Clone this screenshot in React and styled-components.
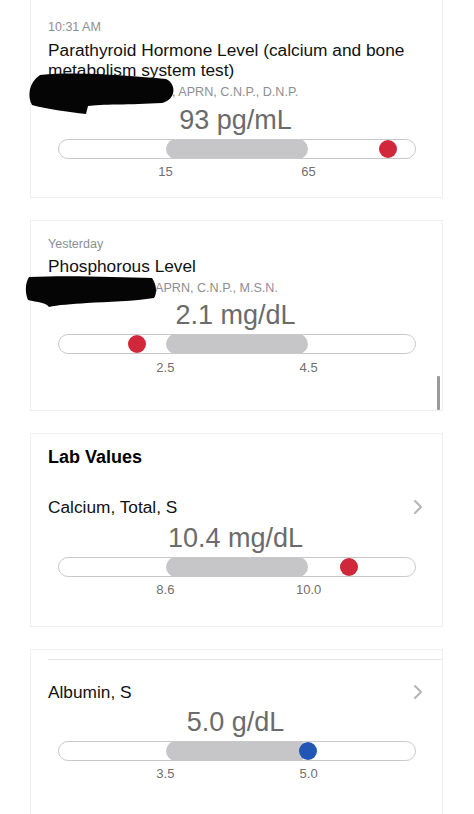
import React from 'react';
import styled, { createGlobalStyle } from 'styled-components';

const GlobalStyle = createGlobalStyle`
  html, body {
    margin: 0;
    padding: 0;
    background: #ffffff;
    font-family: "Liberation Sans", Arial, Helvetica, sans-serif;
    -webkit-font-smoothing: antialiased;
  }
`;

const Page = styled.div`
  width: 474px;
  height: 814px;
  overflow: hidden;
  padding: 0 31px 0 30px;
  box-sizing: border-box;
  display: flex;
  flex-direction: column;
  gap: 22px;
`;

const Card = styled.div`
  border: 1px solid #eeeeee;
  border-top: ${p => (p.$first ? 'none' : '1px solid #eeeeee')};
  padding: ${p => p.$top}px 19px ${p => p.$bottom}px 17px;
  display: flex;
  flex-direction: column;
  flex-shrink: 0;
`;

const Time = styled.div`
  font-size: 12.5px;
  line-height: 16px;
  color: #8e8e93;
`;

const Title = styled.div`
  margin-top: ${p => p.$mt || 4}px;
  font-size: 17.3px;
  line-height: 20px;
  color: #111111;
`;

const Provider = styled.div`
  margin-top: 4px;
  display: flex;
  align-items: center;
  font-size: 12.6px;
  line-height: 16px;
  color: #8e8e93;
`;

const Redacted = styled.span`
  position: relative;
  display: inline-block;
  flex-shrink: 0;
  width: ${p => p.$w}px;
  height: 16px;

  svg {
    position: absolute;
    left: ${p => p.$x}px;
    top: ${p => p.$y}px;
    overflow: visible;
  }
`;

const Heading = styled.div`
  font-size: 18px;
  line-height: 22px;
  font-weight: 700;
  color: #000000;
`;

const NameRow = styled.div`
  margin-top: ${p => p.$mt}px;
  display: flex;
  align-items: center;
  justify-content: space-between;
  font-size: 17.3px;
  line-height: 20px;
  color: #111111;
`;

const Divider = styled.div`
  height: 1px;
  background: #e6e6e6;
  margin-right: -19px;
`;

const Value = styled.div`
  margin-top: ${p => p.$mt || 5}px;
  text-align: center;
  font-size: 27px;
  line-height: 30px;
  color: #6b6b6b;
`;

const Chart = styled.div`
  margin: 4px 7px 0 10px;
  display: flex;
  flex-direction: column;
`;

const Track = styled.div`
  position: relative;
  height: 20px;
  box-sizing: border-box;
  border: 1px solid #c9c9cc;
  border-radius: 10px;
  background: #ffffff;
  overflow: hidden;
`;

const Range = styled.div`
  position: absolute;
  top: -1px;
  bottom: -1px;
  left: 30%;
  width: 40%;
  border-radius: 10px;
  background: #c6c6c8;
`;

const Dot = styled.div`
  position: absolute;
  top: 50%;
  width: 18px;
  height: 18px;
  border-radius: 50%;
  transform: translate(-50%, -50%);
  background: ${p => (p.$flagged ? '#d0283a' : '#2156b5')};
`;

const Labels = styled.div`
  position: relative;
  height: 16px;
  margin-top: ${p => p.$mt || 5}px;
  font-size: 13px;
  line-height: 16px;
  color: #707070;
`;

const Label = styled.span`
  position: absolute;
  top: 0;
  transform: translateX(-50%);
`;

const ScrollThumb = styled.div`
  position: absolute;
  left: 437px;
  top: 376px;
  width: 3px;
  height: 34px;
  border-radius: 1px;
  background: #9a9a9a;
`;

const Chevron = () => (
  <svg width="10" height="16" viewBox="0 0 10 16">
    <polyline points="2,2 8,8 2,14" fill="none" stroke="#b4b4b8" strokeWidth="2" strokeLinecap="round" strokeLinejoin="round" />
  </svg>
);

const RangeChart = ({ pos, flagged, low, high, labelsMt }) => (
  <Chart>
    <Track>
      <Range />
      <Dot style={{ left: `${pos}%` }} $flagged={flagged} />
    </Track>
    <Labels $mt={labelsMt}>
      <Label style={{ left: '30%' }}>{low}</Label>
      <Label style={{ left: '70%' }}>{high}</Label>
    </Labels>
  </Chart>
);

export default function App() {
  return (
    <>
      <GlobalStyle />
      <Page>
        <Card $first $top={19} $bottom={17}>
          <Time>10:31 AM</Time>
          <Title $mt={5}>
            Parathyroid Hormone Level (calcium and bone metabolism system test)
          </Title>
          <Provider>
            <Redacted $w={124} $x={-18} $y={-10}>
              <svg width="142" height="40" viewBox="0 0 142 40">
                <path
                  d="M10 1 C 50 -3, 100 2, 136 5 C 147 10, 146 26, 132 29 C 100 31, 70 30, 58 32 L 56 40 C 38 38, 16 35, 2 31 C -3 22, -1 8, 10 1 Z"
                  fill="#050505"
                />
              </svg>
            </Redacted>
            , APRN, C.N.P., D.N.P.
          </Provider>
          <Value>93 pg/mL</Value>
          <RangeChart pos={92.5} flagged low="15" high="65" />
        </Card>

        <Card $top={15} $bottom={34}>
          <Time>Yesterday</Time>
          <Title>Phosphorous Level</Title>
          <Provider>
            <Redacted $w={107} $x={-21} $y={-3}>
              <svg width="130" height="30" viewBox="0 0 130 30">
                <path
                  d="M2 0 C 40 -2, 90 0, 125 1 C 130 8, 130 17, 127 21 C 108 24, 80 25, 60 26 C 45 27, 30 28, 22 30 C 20 26, 10 25, 1 23 C -2 16, -2 6, 2 0 Z"
                  fill="#050505"
                />
              </svg>
            </Redacted>
            APRN, C.N.P., M.S.N.
          </Provider>
          <Value $mt={4}>2.1 mg/dL</Value>
          <RangeChart pos={22} flagged low="2.5" high="4.5" labelsMt={6} />
        </Card>

        <Card $top={12} $bottom={28}>
          <Heading>Lab Values</Heading>
          <NameRow $mt={29}>
            Calcium, Total, S
            <Chevron />
          </NameRow>
          <Value $mt={6}>10.4 mg/dL</Value>
          <RangeChart pos={81.5} flagged low="8.6" high="10.0" />
        </Card>

        <Card $top={9} $bottom={40}>
          <Divider />
          <NameRow $mt={22}>
            Albumin, S
            <Chevron />
          </NameRow>
          <Value>5.0 g/dL</Value>
          <RangeChart pos={70} low="3.5" high="5.0" />
        </Card>
      </Page>
      <ScrollThumb />
    </>
  );
}
